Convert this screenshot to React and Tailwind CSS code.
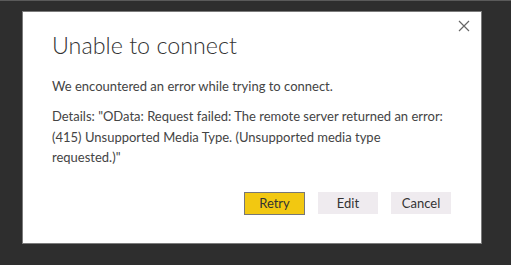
import React from 'react';

export default function App() {
  return (
    <div className="w-[511px] h-[265px] bg-[#2e2e2e] border-t border-[#5a5a5a] pt-[10px] pl-[22px]" style={{ fontFamily: 'Lato, "Open Sans", sans-serif' }}>
      <div className="relative w-[460px] h-[233px] bg-white border border-[#7b7b7b] pl-[29px] pt-[18px]">
        <button className="absolute right-[10px] top-[7px] w-[14px] h-[14px] flex items-center justify-center text-[#666]">
          <svg width="12" height="12" viewBox="0 0 12 12" fill="none" stroke="currentColor" strokeWidth="1.2">
            <path d="M1 1 L11 11 M11 1 L1 11" />
          </svg>
        </button>
        <h1 className="text-[23.3px] font-light text-[#333] leading-[30px]">Unable to connect</h1>
        <p className="mt-[16px] text-[13px] text-[#444] leading-[20px]">We encountered an error while trying to connect.</p>
        <p className="mt-[10px] text-[13px] text-[#444] leading-[20.5px] w-[400px]">
          Details: "OData: Request failed: The remote server returned an error: (415) Unsupported Media Type. (Unsupported media type requested.)"
        </p>
        <div className="absolute left-[221px] top-[180px] flex gap-[13px] text-[13px] text-[#333]">
          <button className="w-[61px] h-[23px] bg-[#f2c811] border border-[#777] leading-[21px]">Retry</button>
          <button className="w-[60px] h-[22px] bg-[#efebef] leading-[22px]">Edit</button>
          <button className="w-[60px] h-[22px] bg-[#efebef] leading-[22px]">Cancel</button>
        </div>
      </div>
    </div>
  );
}
